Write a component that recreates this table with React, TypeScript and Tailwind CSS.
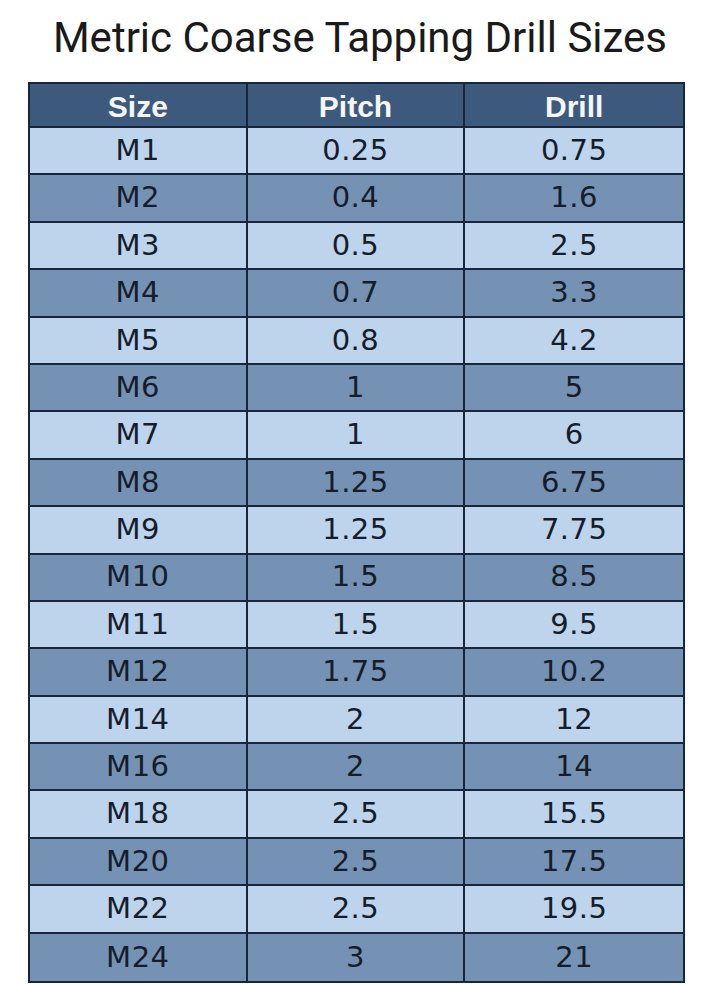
const rows: [string, string, string][] = [
  ['M1', '0.25', '0.75'],
  ['M2', '0.4', '1.6'],
  ['M3', '0.5', '2.5'],
  ['M4', '0.7', '3.3'],
  ['M5', '0.8', '4.2'],
  ['M6', '1', '5'],
  ['M7', '1', '6'],
  ['M8', '1.25', '6.75'],
  ['M9', '1.25', '7.75'],
  ['M10', '1.5', '8.5'],
  ['M11', '1.5', '9.5'],
  ['M12', '1.75', '10.2'],
  ['M14', '2', '12'],
  ['M16', '2', '14'],
  ['M18', '2.5', '15.5'],
  ['M20', '2.5', '17.5'],
  ['M22', '2.5', '19.5'],
  ['M24', '3', '21'],
]

export default function App() {
  return (
    <div className="w-[720px] h-[985px] bg-white overflow-hidden">
      <h1 className="h-[82px] pt-[14px] text-center text-[42px] leading-[48px] text-[#1a1a1a] font-['Roboto',sans-serif]">
        Metric Coarse Tapping Drill Sizes
      </h1>
      <div className="ml-[28px] w-[657px] border-2 border-[#17263a]">
        <div className="grid grid-cols-3 h-[44px] bg-[#3d5a7c] text-[#f4f6f8] font-bold text-[30px] font-['Liberation_Sans',Arial,sans-serif] border-b-2 border-[#17263a]">
          <div className="flex items-center justify-center border-r-2 border-[#17263a]">Size</div>
          <div className="flex items-center justify-center border-r-2 border-[#17263a]">Pitch</div>
          <div className="flex items-center justify-center">Drill</div>
        </div>
        {rows.map((r, i) => (
          <div
            key={r[0]}
            className={`grid grid-cols-3 h-[47.4px] text-[29px] tracking-[0.5px] text-[#131d2b] font-['DejaVu_Sans',Verdana,sans-serif] ${
              i % 2 === 0 ? 'bg-[#bed3ec]' : 'bg-[#7592b4]'
            } ${i < rows.length - 1 ? 'border-b-2 border-[#17263a]' : ''}`}
          >
            <div className="flex items-center justify-center border-r-2 border-[#17263a]">{r[0]}</div>
            <div className="flex items-center justify-center border-r-2 border-[#17263a]">{r[1]}</div>
            <div className="flex items-center justify-center">{r[2]}</div>
          </div>
        ))}
      </div>
    </div>
  )
}
